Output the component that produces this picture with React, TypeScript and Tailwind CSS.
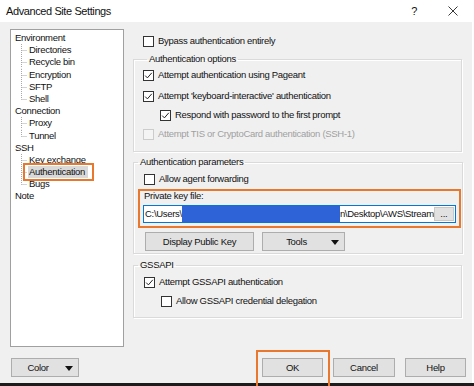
const FONT = "font-['Liberation_Sans',Arial,sans-serif]";

type Node = { label: string; children?: string[] };

const tree: Node[] = [
  { label: 'Environment', children: ['Directories', 'Recycle bin', 'Encryption', 'SFTP', 'Shell'] },
  { label: 'Connection', children: ['Proxy', 'Tunnel'] },
  { label: 'SSH', children: ['Key exchange', 'Authentication', 'Bugs'] },
  { label: 'Note' },
];

function Check({ checked, disabled }: { checked?: boolean; disabled?: boolean }) {
  return (
    <span
      className={`flex h-[11px] w-[11px] shrink-0 items-center justify-center border ${
        disabled ? 'border-[#cccccc] bg-[#f4f4f4]' : 'border-[#333333] bg-white'
      }`}
    >
      {checked && (
        <svg width="9" height="9" viewBox="0 0 9 9">
          <path d="M1.2 4.6 L3.4 6.9 L7.8 1.8" fill="none" stroke="#222" strokeWidth="1" />
        </svg>
      )}
    </span>
  );
}

function CheckRow({
  label,
  checked,
  disabled,
  className = '',
}: {
  label: string;
  checked?: boolean;
  disabled?: boolean;
  className?: string;
}) {
  return (
    <div className={`flex h-[12px] items-center gap-[4px] ${className}`}>
      <Check checked={checked} disabled={disabled} />
      <span className={disabled ? 'text-[#a0a0a0]' : 'text-[#111]'}>{label}</span>
    </div>
  );
}

function Group({ title, className = '', children }: { title: string; className?: string; children: React.ReactNode }) {
  return (
    <fieldset className={`border border-[#dadada] shadow-[inset_1px_1px_0_#fff,1px_1px_0_#fff] ${className}`}>
      <legend className="ml-[4px] px-[2px] leading-[10px] text-[#111]">{title}</legend>
      {children}
    </fieldset>
  );
}

function Btn({ label, arrow, className = '' }: { label: string; arrow?: boolean; className?: string }) {
  return (
    <div
      className={`relative flex h-[19px] items-center justify-center border border-[#adadad] bg-[#e1e1e1] text-[#111] ${className}`}
    >
      <span className={arrow ? 'mr-[14px]' : ''}>{label}</span>
      {arrow && (
        <svg className="absolute right-[5px] top-[7px]" width="8" height="5" viewBox="0 0 8 5">
          <path d="M0 0 H8 L4 5 Z" fill="#111" />
        </svg>
      )}
    </div>
  );
}

function TreeLine({ last }: { last: boolean }) {
  return (
    <svg width="13" height="12.2" viewBox="0 0 13 12.2" className="shrink-0">
      <path d={last ? 'M6.5 0 V6.5' : 'M6.5 0 V12.2'} stroke="#a8a8a8" strokeWidth="1" strokeDasharray="1 1" />
      <path d="M6.5 6.5 H12" stroke="#a8a8a8" strokeWidth="1" strokeDasharray="1 1" />
    </svg>
  );
}

export default function App() {
  return (
    <div className={`h-[386px] w-[474px] overflow-hidden bg-white ${FONT} text-[9.5px] leading-[12px] tracking-[-0.3px]`}>
      <div className="w-[472px]">
        {/* title bar */}
        <div className="flex h-[22px] items-center bg-white pl-[6px] text-[11px] tracking-[-0.4px] text-[#111]">
          <span>Advanced Site Settings</span>
          <span className="ml-auto mr-[31px] text-[11px]">?</span>
          <svg className="mr-[14px]" width="10" height="10" viewBox="0 0 10 10">
            <path d="M0.5 0.5 L9.5 9.5 M9.5 0.5 L0.5 9.5" stroke="#222" strokeWidth="0.9" />
          </svg>
        </div>

        <div className="h-[361px] bg-[#f0f0f0] pt-[7px]">
          <div className="flex">
            {/* tree */}
            <div className="ml-[10px] h-[318px] w-[114px] border border-[#a0a0a0] bg-white pt-[2px] pl-[4px] leading-[12.2px] text-[#111]">
              {tree.map((n) => (
                <div key={n.label}>
                  <div className="h-[12.2px]">{n.label}</div>
                  {n.children?.map((c, i) => (
                    <div key={c} className="flex h-[12.2px] items-center">
                      <TreeLine last={i === n.children!.length - 1} />
                      {c === 'Authentication' ? (
                        <span className="relative bg-[#d9d9d9] pr-[3px] pl-[1px]">
                          {c}
                          <span className="absolute top-[-3px] right-[-6px] bottom-[-3px] left-[-5px] border-2 border-[#e8782e]" />
                        </span>
                      ) : (
                        <span className="pl-[1px]">{c}</span>
                      )}
                    </div>
                  ))}
                </div>
              ))}
            </div>

            {/* settings */}
            <div className="ml-[9px] w-[329px]">
              <CheckRow label="Bypass authentication entirely" className="mt-[6px] ml-[10px]" />

              <Group title="Authentication options" className="mt-[7px] h-[98px] px-[9px]">
                <CheckRow label="Attempt authentication using Pageant" checked className="mt-[5px]" />
                <CheckRow label={"Attempt 'keyboard-interactive' authentication"} checked className="mt-[9px]" />
                <CheckRow label="Respond with password to the first prompt" checked className="mt-[7px] ml-[17px]" />
                <CheckRow label="Attempt TIS or CryptoCard authentication (SSH-1)" disabled className="mt-[7px]" />
              </Group>

              <Group title="Authentication parameters" className="mt-[5px] h-[97px]">
                <CheckRow label="Allow agent forwarding" className="mt-[6px] ml-[10px]" />
                <div className="mt-[4px] ml-[4px] mr-[1px] border-2 border-[#e8782e] px-[3px] pb-[3px]">
                  <div className="h-[10px] pl-[1px] leading-[10px] text-[#111]">Private key file:</div>
                  <div className="mt-[4px] flex h-[18px] items-center border border-[#0078d7] bg-white">
                    <span className="pl-[1px] text-[#111]">C:\Users\</span>
                    <span className="h-full w-[158px] bg-[#2d63d6]" />
                    <span className="text-[#111]">n\Desktop\AWS\Stream</span>
                    <span className="ml-auto mr-[1px] flex h-[14px] w-[20px] items-center justify-center border border-[#c8c8c8] bg-[#e1e1e1] leading-none text-[#111]">
                      ...
                    </span>
                  </div>
                </div>
                <div className="mt-[4px] ml-[11px] flex gap-[8px]">
                  <Btn label="Display Public Key" className="w-[109px]" />
                  <Btn label="Tools" arrow className="w-[83px]" />
                </div>
              </Group>

              <Group title="GSSAPI" className="mt-[6px] h-[58px]">
                <CheckRow label="Attempt GSSAPI authentication" checked className="mt-[6px] ml-[10px]" />
                <CheckRow label="Allow GSSAPI credential delegation" className="mt-[7px] ml-[27px]" />
              </Group>
            </div>
          </div>

          {/* bottom buttons */}
          <div className="mt-[11px] flex items-center">
            <Btn label="Color" arrow className="ml-[11px] w-[68px]" />
            <div className="relative ml-[183px]">
              <Btn label="OK" className="w-[61px] border-[#0078d7]" />
              <span className="pointer-events-none absolute top-[-8px] right-[-7px] bottom-[-12px] left-[-6px] border-2 border-[#e8782e]" />
            </div>
            <Btn label="Cancel" className="ml-[10px] w-[62px]" />
            <Btn label="Help" className="ml-[10px] w-[61px]" />
          </div>
        </div>
      </div>
      <div className="h-[3px] bg-[#1c1c1c]" />
    </div>
  );
}
